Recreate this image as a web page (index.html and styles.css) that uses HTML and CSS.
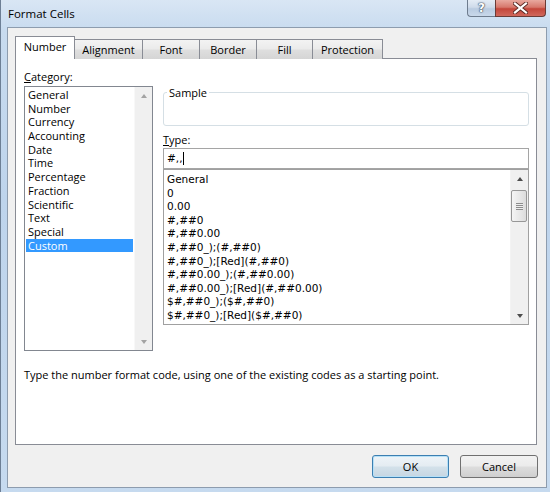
FILE: index.html
```html
<!DOCTYPE html>
<html>
<head>
<meta charset="utf-8">
<link rel="stylesheet" href="styles.css">
</head>
<body>
<div class="window">
  <div class="titlebar">
    <span class="title">Format Cells</span>
    <div class="caption">
      <div class="cbtn help">?</div>
      <div class="cbtn close">
        <svg width="15" height="12" viewBox="0 0 15 12">
          <path d="M2 1.5 L13 10.5 M13 1.5 L2 10.5" stroke="#5a2a24" stroke-width="4" stroke-linecap="square" fill="none"/>
          <path d="M2 1.5 L13 10.5 M13 1.5 L2 10.5" stroke="#ffffff" stroke-width="2.2" stroke-linecap="square" fill="none"/>
        </svg>
      </div>
    </div>
  </div>
  <div class="client">
    <div class="tabs">
      <div class="tab sel w-number">Number</div>
      <div class="tab w-align">Alignment</div>
      <div class="tab w-font">Font</div>
      <div class="tab w-border">Border</div>
      <div class="tab w-fill">Fill</div>
      <div class="tab w-prot">Protection</div>
    </div>
    <div class="panel">
      <div class="cols">
        <div class="leftcol">
          <div class="lbl"><u>C</u>ategory:</div>
          <div class="catlist">
            <div class="items">
              <div class="item">General</div>
              <div class="item">Number</div>
              <div class="item">Currency</div>
              <div class="item">Accounting</div>
              <div class="item">Date</div>
              <div class="item">Time</div>
              <div class="item">Percentage</div>
              <div class="item">Fraction</div>
              <div class="item">Scientific</div>
              <div class="item">Text</div>
              <div class="item">Special</div>
              <div class="item selected">Custom</div>
            </div>
            <div class="vscroll disabled">
              <span class="arrow up"></span>
              <span class="track"></span>
              <span class="arrow down"></span>
            </div>
          </div>
        </div>
        <div class="rightcol">
          <fieldset class="sample">
            <legend>Sample</legend>
            <div class="sample-body"></div>
          </fieldset>
          <div class="lbl type-lbl"><u>T</u>ype:</div>
          <div class="typeinput">#,,<span class="caret"></span></div>
          <div class="typelist">
            <div class="items">
              <div class="code">General</div>
              <div class="code">0</div>
              <div class="code">0.00</div>
              <div class="code">#,##0</div>
              <div class="code">#,##0.00</div>
              <div class="code">#,##0_);(#,##0)</div>
              <div class="code">#,##0_);[Red](#,##0)</div>
              <div class="code">#,##0.00_);(#,##0.00)</div>
              <div class="code">#,##0.00_);[Red](#,##0.00)</div>
              <div class="code">$#,##0_);($#,##0)</div>
              <div class="code">$#,##0_);[Red]($#,##0)</div>
            </div>
            <div class="vscroll">
              <span class="arrow up"></span>
              <span class="thumbarea"><span class="thumb"><span class="grip"></span></span></span>
              <span class="track"></span>
              <span class="arrow down"></span>
            </div>
          </div>
        </div>
      </div>
      <div class="desc">Type the number format code, using one of the existing codes as a starting point.</div>
    </div>
    <div class="buttons">
      <button class="btn default">OK</button>
      <button class="btn wide">Cancel</button>
    </div>
  </div>
</div>
</body>
</html>
```

FILE: styles.css
```css
html, body {
  margin: 0;
  padding: 0;
}
body {
  width: 550px;
  height: 492px;
  overflow: hidden;
  font-family: "Open Sans", "Liberation Sans", sans-serif;
  font-size: 11px;
  color: #000;
}
.window {
  width: 550px;
  height: 492px;
  box-sizing: border-box;
  background: linear-gradient(180deg, #d9e6f4 0px, #c8dbef 30px, #bed4ec 200px, #c6daef 492px);
  position: relative;
  border-left: 1px solid #6d7f95;
}
.titlebar {
  height: 27px;
  display: flex;
  align-items: center;
  position: relative;
}
.title {
  padding-left: 7px;
  font-size: 11.5px;
  line-height: 26px;
  color: #000;
}
.caption {
  position: absolute;
  top: 0;
  right: 4px;
  display: flex;
}
.cbtn {
  height: 17px;
  box-sizing: border-box;
  border: 1px solid #6e7c8e;
  border-top: none;
  display: flex;
  align-items: center;
  justify-content: center;
}
.help {
  width: 28px;
  border-radius: 0 0 0 4px;
  border-right: none;
  background: linear-gradient(180deg, #e4ecf5 0%, #cfdbea 45%, #b9cbe0 55%, #c9d8ea 100%);
  color: #fff;
  font-family: "DejaVu Sans", sans-serif;
  font-weight: bold;
  font-size: 12px;
  text-shadow: 0 0 1px #3c4a5c, 0 0 1px #3c4a5c, 0 0 2px #3c4a5c;
}
.close {
  width: 51px;
  border-radius: 0 0 4px 0;
  border-color: #6b3b36;
  background: linear-gradient(180deg, #e9a99f 0%, #d7786c 45%, #c4463a 55%, #d0685c 100%);
}
.client {
  position: absolute;
  left: 6px;
  top: 27px;
  width: 540px;
  height: 461px;
  box-sizing: border-box;
  border: 1px solid #8d9cae;
  background: #f0f0f0;
  padding: 8px 8px 0 7px;
}
.tabs {
  display: flex;
  align-items: flex-end;
  height: 23px;
}
.tab {
  box-sizing: border-box;
  height: 20px;
  border: 1px solid #898c95;
  border-bottom: none;
  margin-left: -1px;
  background: linear-gradient(180deg, #f3f3f3 0%, #ebebeb 45%, #dedede 55%, #d5d5d5 100%);
  text-align: center;
  font-size: 11px;
  line-height: 19px;
}
.tab.sel {
  height: 23px;
  margin-left: 0;
  background: #fff;
  position: relative;
  z-index: 1;
  line-height: 20px;
}
.w-number { width: 60px; }
.w-align { width: 69px; }
.w-font { width: 58px; }
.w-border { width: 58px; }
.w-fill { width: 57px; }
.w-prot { width: 71px; }
.panel {
  margin-top: -1px;
  width: 522px;
  height: 387px;
  box-sizing: border-box;
  border: 1px solid #898c95;
  background: #fff;
  padding: 0 0 0 8px;
}
.cols {
  display: flex;
  gap: 10px;
}
.leftcol {
  width: 129px;
  padding-top: 10px;
}
.lbl {
  line-height: 16px;
  height: 16px;
  font-size: 11px;
}
.catlist {
  margin-top: 1px;
  height: 265px;
  box-sizing: border-box;
  border: 1px solid #828790;
  display: flex;
  padding: 1px 0 0 1px;
}
.catlist .items {
  width: 107px;
}
.item {
  height: 13.7px;
  line-height: 13.7px;
  padding-left: 2px;
  font-size: 11px;
  white-space: nowrap;
}
.item.selected {
  background: #3399ff;
  color: #fff;
}
.vscroll {
  margin-left: auto;
  width: 17px;
  background: #f0f0f0;
  display: flex;
  flex-direction: column;
  margin-top: -1px;
  border-left: 1px solid #f8f8f8;
}
.vscroll .arrow {
  height: 17px;
  display: flex;
  align-items: center;
  justify-content: center;
}
.vscroll .arrow::before {
  content: "";
  width: 0;
  height: 0;
  border-left: 3.5px solid transparent;
  border-right: 3.5px solid transparent;
}
.vscroll .arrow.up::before {
  border-bottom: 4px solid #4d4d4d;
}
.vscroll .arrow.down::before {
  border-top: 4px solid #4d4d4d;
}
.vscroll.disabled .arrow.up::before {
  border-bottom-color: #a3a3a3;
}
.vscroll.disabled .arrow.down::before {
  border-top-color: #a3a3a3;
}
.vscroll .track {
  flex: 1;
}
.thumbarea {
  display: block;
  height: 33px;
  padding-top: 3px;
}
.thumb {
  display: flex;
  align-items: center;
  justify-content: center;
  height: 32px;
  width: 16px;
  box-sizing: border-box;
  border: 1px solid #979797;
  border-radius: 2px;
  background: linear-gradient(90deg, #f5f5f5 0%, #e9e9e9 50%, #dcdcdc 100%);
}
.grip {
  display: block;
  width: 7px;
  height: 7px;
  background: repeating-linear-gradient(180deg, #8d8d8d 0px, #8d8d8d 1px, #eeeeee 1px, #eeeeee 2px);
}
.rightcol {
  width: 366px;
  padding-top: 26px;
}
.sample {
  margin: 0;
  padding: 0 0 0 3px;
  border: 1px solid #d5dfe5;
  border-radius: 3px;
  min-width: 0;
}
.sample legend {
  padding: 0 2px;
  line-height: 15px;
  font-size: 11px;
}
.sample-body {
  height: 25px;
}
.type-lbl {
  margin-top: 6px;
}
.typeinput {
  height: 21px;
  box-sizing: border-box;
  border: 1px solid #a5a5a5;
  padding-left: 3px;
  font-family: "DejaVu Sans", sans-serif;
  font-size: 10.5px;
  line-height: 19px;
  display: flex;
  align-items: center;
}
.caret {
  display: inline-block;
  width: 1px;
  height: 13px;
  background: #000;
  margin-left: 1px;
}
.typelist {
  height: 156px;
  box-sizing: border-box;
  border: 1px solid #a0a0a0;
  display: flex;
}
.typelist .items {
  padding: 3px 0 0 3px;
  overflow: hidden;
}
.code {
  font-family: "DejaVu Sans", sans-serif;
  font-size: 10.5px;
  height: 13.6px;
  line-height: 13.6px;
  white-space: nowrap;
}
.typelist .vscroll {
  margin-top: 0;
  border-left: 1px solid #f3f3f3;
}
.desc {
  margin-top: 16px;
  line-height: 16px;
  font-size: 11px;
}
.buttons {
  display: flex;
  justify-content: flex-end;
  gap: 11px;
  margin-top: 10px;
}
.btn {
  width: 77px;
  height: 23px;
  box-sizing: border-box;
  border: 1px solid #707070;
  border-radius: 3px;
  background: linear-gradient(180deg, #f2f2f2 0%, #ebebeb 48%, #dddddd 52%, #cfcfcf 100%);
  font-family: "Open Sans", "Liberation Sans", sans-serif;
  font-size: 11px;
  color: #000;
  padding: 0;
}
.btn.wide {
  width: 78px;
}
.btn.default {
  border-color: #3c7fb1;
  box-shadow: inset 0 0 0 1px #b6e0f7;
  background: linear-gradient(180deg, #eef4f8 0%, #e4ecf2 48%, #d3e1ea 52%, #c6d6e2 100%);
}
```
